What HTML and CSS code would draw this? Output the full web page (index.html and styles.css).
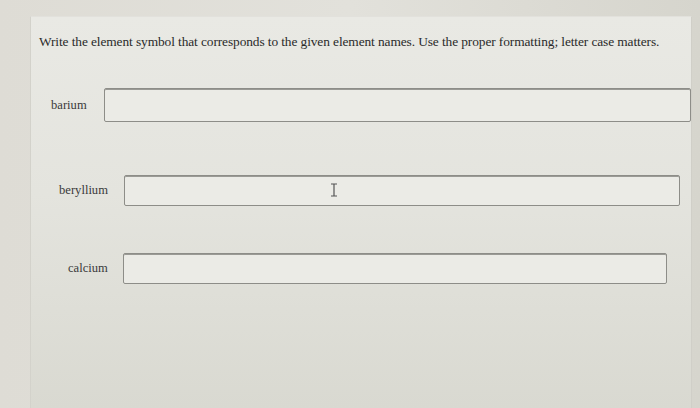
FILE: index.html
```html
<!DOCTYPE html>
<html>
<head>
<meta charset="utf-8">
<link rel="stylesheet" href="styles.css">
</head>
<body>
<div class="panel">
  <p class="prompt">Write the element symbol that corresponds to the given element names. Use the proper formatting; letter case matters.</p>
  <div class="row row-1">
    <label class="label" for="a1">barium</label>
    <input class="answer" id="a1" type="text">
  </div>
  <div class="row row-2">
    <label class="label" for="a2">beryllium</label>
    <div class="field">
      <input class="answer" id="a2" type="text">
      <svg class="ibeam" width="8" height="14" viewBox="0 0 8 14"><path d="M1 1h6M4 1v12M1 13h6" stroke="#555" stroke-width="1.2" fill="none"/></svg>
    </div>
  </div>
  <div class="row row-3">
    <label class="label" for="a3">calcium</label>
    <input class="answer" id="a3" type="text">
  </div>
</div>
</body>
</html>
```

FILE: styles.css
```css
html, body {
  margin: 0;
  padding: 0;
}
body {
  width: 700px;
  height: 408px;
  overflow: hidden;
  background: linear-gradient(90deg, #dedcd5 0%, #e2e1db 50%, #d6d5cd 100%);
  font-family: "Liberation Serif", "Times New Roman", serif;
}
.panel {
  margin: 16px 8px 0 30px;
  height: 392px;
  box-sizing: border-box;
  padding-top: 18px;
  background: linear-gradient(180deg, #e9e9e4 0%, #e4e4de 45%, #d9d9d1 100%);
  border-top: 1px solid #e2e1dc;
  border-left: 1px solid #d3d2cb;
  border-right: 1px solid #d0cfc8;
}
.prompt {
  margin: 0 0 0 8px;
  font-size: 13.4px;
  line-height: 14px;
  color: #2a2a2a;
  letter-spacing: -0.1px;
}
.row {
  display: flex;
  align-items: center;
}
.label {
  font-size: 12.6px;
  color: #3a3a3a;
  flex: none;
}
.answer {
  display: block;
  box-sizing: border-box;
  width: 100%;
  margin: 0;
  padding: 0;
  border: 1px solid #8d8d88;
  border-radius: 2px;
  background: #ebebe6;
  box-shadow: inset 0 1px 0 #9a9a95;
}
.row > .answer {
  flex: 1;
}
.field {
  flex: 1;
  position: relative;
}
.ibeam {
  position: absolute;
  left: 206px;
  top: 8px;
}
.row-1 {
  margin-top: 39px;
  padding-left: 20px;
}
.row-1 .label { width: 53px; }
.row-1 .answer { height: 34px; }
.row-2 {
  margin-top: 53px;
  padding-left: 28px;
  padding-right: 11px;
}
.row-2 .label { width: 65px; }
.row-2 .answer { height: 31px; }
.row-3 {
  margin-top: 47px;
  padding-left: 37px;
  padding-right: 24px;
}
.row-3 .label { width: 55px; }
.row-3 .answer { height: 31px; }
```
